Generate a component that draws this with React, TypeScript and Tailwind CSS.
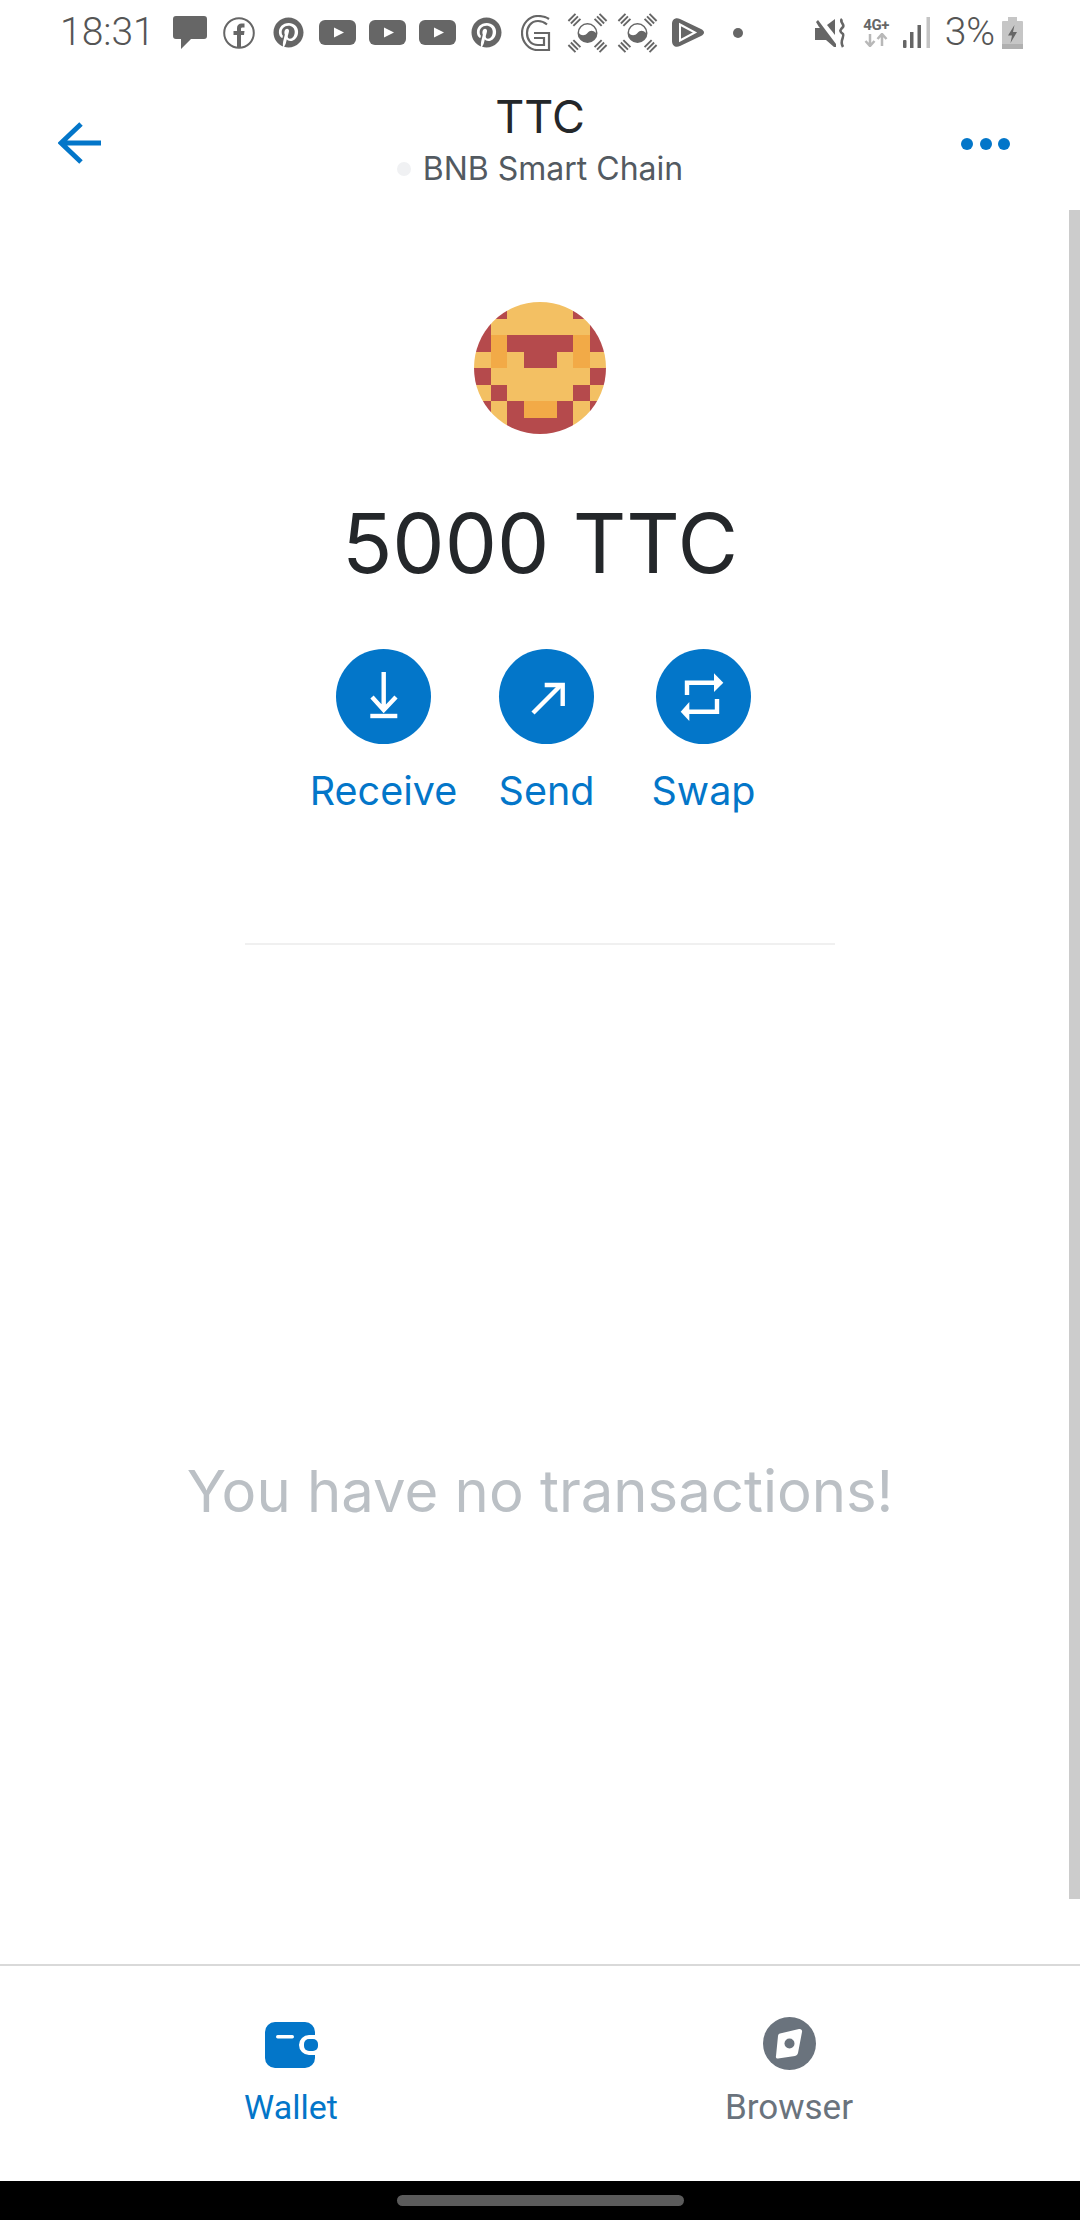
import React from "react";
import { FaPinterest } from "react-icons/fa";

const G = "#666666";

function Chat() {
  return (
    <svg width="34" height="33" viewBox="0 0 34 33" className="ml-[18px]">
      <path d="M3 0H31A3 3 0 0 1 34 3V20A3 3 0 0 1 31 23H18L8 33V23H3A3 3 0 0 1 0 20V3A3 3 0 0 1 3 0Z" fill={G} />
    </svg>
  );
}
function Fb() {
  return (
    <svg width="32" height="32" viewBox="0 0 32 32" className="ml-[16px]">
      <circle cx="16" cy="16" r="14.8" fill="none" stroke={G} strokeWidth="2" />
      <path d="M14 30V18H10.5V14H14V11C14 8 16 6.5 18.5 6.5H21.5V10.5H19.5C18.4 10.5 18 11 18 12V14H21.5L21 18H18V30Z" fill={G} />
    </svg>
  );
}
function Yt({ ml }: { ml: string }) {
  return (
    <svg width="37" height="25" viewBox="0 0 37 25" className={ml}>
      <rect width="37" height="25" rx="6" fill={G} />
      <path d="M15 7.5L25 12.5L15 17.5Z" fill="#fff" />
    </svg>
  );
}
function GIcon() {
  return (
    <svg width="30" height="36" viewBox="0 0 30 36" className="ml-[19px]">
      <g fill="none" stroke={G} strokeWidth="2.2">
        <path d="M28 4C25 2 21 1 17 1C8 1 1 9 1 18C1 27 8 35 16 35H28V18H13" />
        <path d="M26 9.5C23 7 20 6 17 6C10 6 6 12 6 18C6 25 10 30 17 30H23V23H13" />
      </g>
    </svg>
  );
}
function Korea({ ml }: { ml: string }) {
  const tri = (r: number) => (
    <g transform={`rotate(${r} 18.5 18)`}>
      <path d="M13.5 -4H23.5M13.5 -0.5H23.5M13.5 3H23.5" stroke={G} strokeWidth="1.9" />
    </g>
  );
  return (
    <svg width="37" height="36" viewBox="0 0 37 36" className={`${ml} overflow-visible`}>
      {tri(-45)}
      {tri(45)}
      {tri(135)}
      {tri(225)}
      <circle cx="18.5" cy="18" r="10" fill={G} />
      <path d="M10 18A8.5 8.5 0 0 1 27 18C24 15 21 15 18.5 18C16 21 12 21 10 18Z" fill="#fff" />
    </svg>
  );
}
function Play() {
  return (
    <svg width="32" height="29" viewBox="0 0 32 29" className="ml-[16px]">
      <path d="M0 6C0 1 4 -1 8 1L29 11C33 13 33 16 29 18L8 28C4 30 0 28 0 23Z" fill={G} />
      <path d="M8 6.5L23 14.5L8 22.5Z" fill={G} stroke="#fff" strokeWidth="2" />
    </svg>
  );
}
function Mute() {
  return (
    <svg width="31" height="30" viewBox="0 0 31 30" className="ml-[72px]">
      <path d="M0 10H5L4 9L1 4L3 2L21 26V29H19L11 22H0Z" fill={G} />
      <path d="M12 7L20 1V17Z" fill={G} />
      <path d="M27 1C24 4 30 6 28 9C25 12 24 13 28 16C30 19 24 22 28 29" fill="none" stroke={G} strokeWidth="2.6" />
    </svg>
  );
}
function Signal() {
  return (
    <svg width="27" height="31" viewBox="0 0 27 31" className="ml-[11px]">
      <rect x="0" y="23" width="3.5" height="8" rx="1" fill={G} />
      <rect x="7" y="15" width="3.5" height="16" fill={G} />
      <rect x="14.5" y="8" width="3.5" height="23" fill={G} />
      <rect x="23.5" y="0" width="3.5" height="31" fill="#c4c4c4" />
    </svg>
  );
}
function Battery() {
  return (
    <svg width="21" height="32" viewBox="0 0 21 32" className="ml-[7px]">
      <path d="M6 0H15V4H20A1 1 0 0 1 21 5V31A1 1 0 0 1 20 32H1A1 1 0 0 1 0 31V5A1 1 0 0 1 1 4H6Z" fill="#c6c6c6" />
      <rect y="27" width="21" height="5" fill="#b0b0b0" />
      <path d="M12.5 8L6 18.5H10L8.5 26L15 15H11Z" fill={G} />
    </svg>
  );
}
function StatusBar() {
  return (
    <div className="flex h-[63px] shrink-0 items-center pl-[60px] pt-[2px]" style={{ color: G }}>
      <span className="font-['Roboto',sans-serif] text-[39px] font-light leading-none text-[#555555]">18:31</span>
      <Chat />
      <Fb />
      <FaPinterest size={31} color={G} className="ml-[18px]" />
      <Yt ml="ml-[15px]" />
      <Yt ml="ml-[13px]" />
      <Yt ml="ml-[13px]" />
      <FaPinterest size={31} color={G} className="ml-[15px]" />
      <GIcon />
      <Korea ml="ml-[18px]" />
      <Korea ml="ml-[13px]" />
      <Play />
      <span className="ml-[29px] h-[10px] w-[10px] rounded-full bg-[#666666]" />
      <Mute />
      <div className="ml-[15px] flex w-[31px] flex-col items-center">
        <span className="font-['Roboto',sans-serif] text-[15px] font-bold leading-[15px] tracking-tight text-[#666666]">4G+</span>
        <svg width="24" height="14" viewBox="0 0 24 14">
          <path d="M6 1V12M1.5 8L6 13L10.5 8" fill="none" stroke="#b8b8b8" strokeWidth="2.5" />
          <path d="M18 13V2M13.5 6L18 1L22.5 6" fill="none" stroke="#b8b8b8" strokeWidth="2.5" />
        </svg>
      </div>
      <Signal />
      <span className="ml-[15px] font-['Roboto',sans-serif] text-[39px] font-light leading-none text-[#555555]">3%</span>
      <Battery />
    </div>
  );
}

function Header() {
  return (
    <div className="relative flex h-[87px] shrink-0 flex-col items-center font-['Inter',sans-serif]">
      <svg width="44" height="42" viewBox="0 0 44 42" className="absolute left-[58px] top-[59px]">
        <path d="M43 21H4M23 2L3 21L23 40" fill="none" stroke="#0376c9" strokeWidth="5" />
      </svg>
      <span className="mt-[28px] text-[45px] font-normal leading-[52px] text-[#24272a]">TTC</span>
      <div className="mt-[7px] flex items-center">
        <span className="h-[14px] w-[14px] rounded-full bg-[#f0f1f3]" />
        <span className="ml-[12px] text-[32px] font-normal leading-[38px] text-[#535a61]">BNB Smart Chain</span>
      </div>
      <div className="absolute left-[961px] top-[75px] flex gap-[6.5px]">
        <span className="h-[12px] w-[12px] rounded-full bg-[#0376c9]" />
        <span className="h-[12px] w-[12px] rounded-full bg-[#0376c9]" />
        <span className="h-[12px] w-[12px] rounded-full bg-[#0376c9]" />
      </div>
    </div>
  );
}

const Y = "#f3c063";
const R = "#b54a4c";
const O = "#f2aa47";
const grid = [
  [R, R, Y, Y, Y, Y, R, R],
  [R, Y, Y, Y, Y, Y, Y, R],
  [R, O, R, R, R, R, O, R],
  [Y, O, Y, R, R, Y, O, Y],
  [R, Y, Y, Y, Y, Y, Y, R],
  [Y, R, Y, Y, Y, Y, R, Y],
  [R, Y, R, O, O, R, Y, R],
  [Y, Y, R, R, R, R, Y, Y],
];
function Avatar() {
  return (
    <svg width="132" height="132" viewBox="0 0 8 8" shapeRendering="crispEdges" className="rounded-full">
      {grid.map((row, y) => row.map((c, x) => <rect key={`${x}-${y}`} x={x} y={y} width="1" height="1" fill={c} />))}
    </svg>
  );
}

function Action({ label, children }: { label: string; children: React.ReactNode }) {
  return (
    <div className="flex w-[95px] flex-col items-center">
      <div className="h-[95px] w-[95px] rounded-full bg-[#0376c9]">
        <svg width="95" height="95" viewBox="0 0 95 95" fill="none" stroke="#fff" strokeWidth="4.4">
          {children}
        </svg>
      </div>
      <span className="mt-[24px] whitespace-nowrap text-[39.5px] font-normal leading-[46px] text-[#0376c9]">{label}</span>
    </div>
  );
}

function Main() {
  return (
    <div className="relative flex min-h-0 flex-1 flex-col items-center font-['Inter',sans-serif]">
      <div className="absolute right-0 top-[60px] h-[1689px] w-[11px] bg-[#cccccc]" />
      <div className="mt-[152px]">
        <Avatar />
      </div>
      <div className="mt-[59px] text-[83px] font-normal leading-[100px] text-[#24272a]">5000 TTC</div>
      <div className="ml-[7px] mt-[56px] flex items-start">
        <Action label="Receive">
          <path d="M47.7 23V62M36 48L47.7 61L60 48" />
          <path d="M34.3 67H61.3" />
        </Action>
        <div className="ml-[68px]">
          <Action label="Send">
            <path d="M34 64L62 36" />
            <path d="M45.7 36H63.7V57" />
          </Action>
        </div>
        <div className="ml-[62px]">
          <Action label="Swap">
            <path d="M31 46V33.7H60" />
            <path d="M58 24.3L67.3 33.7L58 43Z" fill="#fff" stroke="none" />
            <path d="M61 50V62.7H31" />
            <path d="M33.3 53L24.7 62.7L33.3 72Z" fill="#fff" stroke="none" />
          </Action>
        </div>
      </div>
      <div className="mt-[129px] h-[2px] w-[590px] bg-[#f0f0f0]" />
      <div className="mt-[514px] text-[58px] font-normal leading-[64px] text-[#bbc0c5]">You have no transactions!</div>
    </div>
  );
}

function TabBar() {
  return (
    <div className="flex h-[217px] shrink-0 items-start justify-center gap-[298px] border-t-2 border-[#d9d9d9] font-['Roboto',sans-serif]">
      <div className="flex w-[200px] flex-col items-center pt-[56px]">
        <svg width="53" height="46" viewBox="0 0 53 46">
          <path d="M10 0H40A10 10 0 0 1 50 10V13H44A10 10 0 0 0 44 33H50V36A10 10 0 0 1 40 46H10A10 10 0 0 1 0 36V10A10 10 0 0 1 10 0Z" fill="#0376c9" />
          <rect x="39" y="17" width="14" height="12" rx="5" fill="#0376c9" />
          <rect x="11" y="13" width="18" height="3.5" rx="1.7" fill="#fff" />
        </svg>
        <span className="mt-[19px] text-[34px] leading-[40px] text-[#0376c9]">Wallet</span>
      </div>
      <div className="flex w-[200px] flex-col items-center pt-[51px]">
        <svg width="53" height="53" viewBox="0 0 53 53">
          <circle cx="26.5" cy="26.5" r="26.5" fill="#6a737d" />
          <path d="M17 16.5L36 12C38 11.5 39.5 13 39 15L35 36C34.6 37.5 33.5 38.5 32 39L15 41.5C13.5 41.8 12.5 40.5 13 39L15 19C15.2 17.5 16 16.8 17 16.5Z" fill="#fff" />
          <circle cx="26.5" cy="26.5" r="5" fill="#6a737d" />
        </svg>
        <span className="mt-[18px] text-[35px] leading-[40px] text-[#6a737d]">Browser</span>
      </div>
    </div>
  );
}

export default function App() {
  return (
    <div className="flex h-[2220px] w-[1080px] flex-col overflow-hidden bg-white">
      <StatusBar />
      <Header />
      <Main />
      <TabBar />
      <div className="flex h-[39px] shrink-0 items-start justify-center bg-black pt-[14px]">
        <div className="h-[11px] w-[287px] rounded-full bg-[#5b5b5b]" />
      </div>
    </div>
  );
}
